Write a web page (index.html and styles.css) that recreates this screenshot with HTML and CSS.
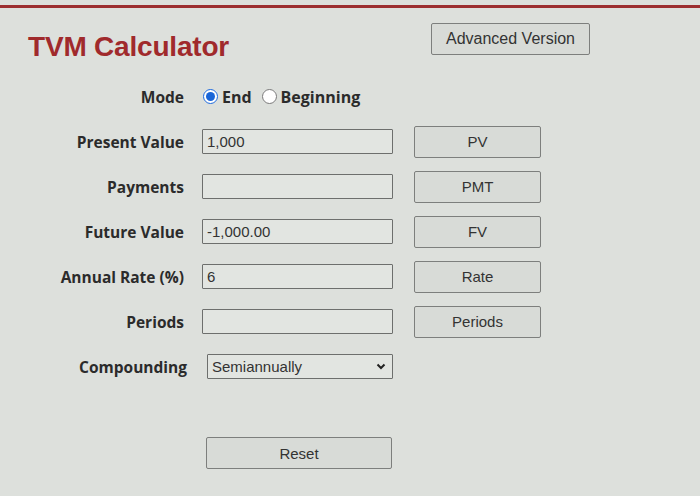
FILE: index.html
```html
<!DOCTYPE html>
<html lang="en">
<head>
<meta charset="utf-8">
<title>TVM Calculator</title>
<link rel="stylesheet" href="styles.css">
</head>
<body>
<div class="topline"></div>
<header class="header">
  <h1 class="title">TVM Calculator</h1>
  <button class="btn btn-adv" type="button">Advanced Version</button>
</header>
<main class="form">
  <div class="row">
    <label class="label">Mode</label>
    <div class="radios">
      <label class="radio"><input type="radio" name="mode" checked><span>End</span></label>
      <label class="radio"><input type="radio" name="mode"><span>Beginning</span></label>
    </div>
  </div>
  <div class="row">
    <label class="label">Present Value</label>
    <input class="field" type="text" value="1,000">
    <button class="btn btn-calc" type="button">PV</button>
  </div>
  <div class="row">
    <label class="label">Payments</label>
    <input class="field" type="text" value="">
    <button class="btn btn-calc" type="button">PMT</button>
  </div>
  <div class="row">
    <label class="label">Future Value</label>
    <input class="field" type="text" value="-1,000.00">
    <button class="btn btn-calc" type="button">FV</button>
  </div>
  <div class="row">
    <label class="label">Annual Rate (%)</label>
    <input class="field" type="text" value="6">
    <button class="btn btn-calc" type="button">Rate</button>
  </div>
  <div class="row">
    <label class="label">Periods</label>
    <input class="field" type="text" value="">
    <button class="btn btn-calc" type="button">Periods</button>
  </div>
  <div class="row">
    <label class="label label-comp">Compounding</label>
    <div class="select-wrap">
      <select class="select">
        <option>Semiannually</option>
      </select>
      <svg class="chev" width="10" height="7" viewBox="0 0 10 7"><path d="M1.5 1.5 L5 5 L8.5 1.5" fill="none" stroke="#222" stroke-width="2"/></svg>
    </div>
  </div>
  <div class="row-reset">
    <button class="btn btn-reset" type="button">Reset</button>
  </div>
</main>
</body>
</html>
```
FILE: styles.css
```css
html, body {
  margin: 0;
  padding: 0;
}
body {
  background: #dde0dc;
  font-family: "Liberation Sans", Arial, sans-serif;
  color: #2a2a2a;
  width: 700px;
  height: 496px;
  overflow: hidden;
}
.topline {
  height: 3px;
  margin-top: 5px;
  background: #9c2f30;
}
.header {
  display: flex;
  justify-content: space-between;
  align-items: flex-start;
  width: 562px;
  margin-left: 28px;
  margin-top: 15px;
}
.title {
  margin: 8px 0 0 0;
  font-size: 28px;
  font-weight: bold;
  color: #a02a2c;
  line-height: 31px;
  letter-spacing: -0.2px;
}
.btn {
  font-family: "Liberation Sans", Arial, sans-serif;
  color: #333;
  background: #d8dbd7;
  border: 1px solid #7d7f7d;
  border-radius: 2px;
  padding: 0;
}
.btn-adv {
  width: 159px;
  height: 32px;
  font-size: 16px;
}
.form {
  margin-top: 12px;
}
.row {
  display: grid;
  grid-template-columns: 184px 191px 127px;
  column-gap: 18px;
  align-items: center;
  height: 45px;
}
.row:first-child {
  column-gap: 19px;
}
.label {
  text-align: right;
  font-family: "Open Sans", sans-serif;
  font-weight: 700;
  font-size: 15.5px;
  color: #2b2b2b;
}
.label-comp {
  padding-right: 0;
  margin-right: -3px;
}
.radios {
  display: flex;
  align-items: center;
  gap: 10px;
  grid-column: 2 / 4;
}
.radio {
  display: flex;
  align-items: center;
  gap: 4px;
  font-family: "Open Sans", sans-serif;
  font-weight: 700;
  font-size: 16px;
  color: #2b2b2b;
}
.radio input {
  margin: 0;
  width: 15px;
  height: 15px;
  accent-color: #1a66d8;
}
.field {
  box-sizing: border-box;
  height: 25px;
  width: 191px;
  margin-left: 0;
  border: 1px solid #6d6f6d;
  border-radius: 1px;
  background: #e2e5e1;
  font-family: "Liberation Sans", Arial, sans-serif;
  font-size: 15px;
  color: #333;
  padding: 0 4px;
}
.btn-calc {
  width: 127px;
  height: 32px;
  font-size: 15px;
  margin-left: 3px;
}
.select-wrap {
  position: relative;
  width: 186px;
  margin-left: 5px;
}
.select {
  appearance: none;
  -webkit-appearance: none;
  box-sizing: border-box;
  width: 186px;
  height: 25px;
  border: 1px solid #6d6f6d;
  border-radius: 1px;
  background: #e2e5e1;
  font-family: "Liberation Sans", Arial, sans-serif;
  font-size: 15px;
  color: #333;
  padding: 0 4px;
}
.chev {
  position: absolute;
  right: 7px;
  top: 9px;
}
.row-reset {
  display: grid;
  grid-template-columns: 186px;
  margin-top: 48px;
  margin-left: 206px;
}
.btn-reset {
  width: 186px;
  height: 32px;
  font-size: 15px;
}
```
